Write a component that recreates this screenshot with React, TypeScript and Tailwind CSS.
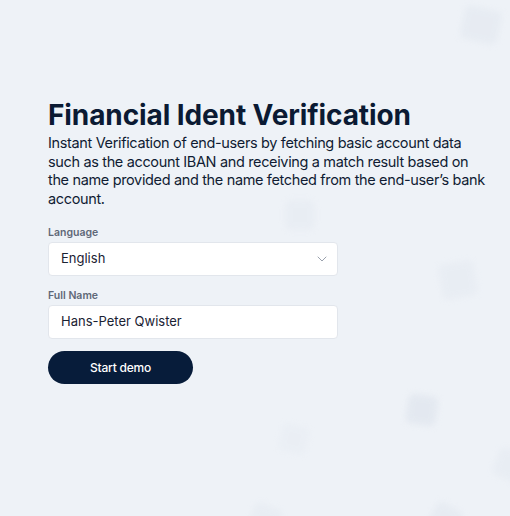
import React from "react";

const squares = [
  "left-[462px] top-[8px] w-[38px] h-[34px] rotate-[12deg] opacity-40",
  "left-[285px] top-[200px] w-[30px] h-[30px] opacity-30",
  "left-[440px] top-[262px] w-[36px] h-[36px] rotate-[-10deg] opacity-30",
  "left-[407px] top-[395px] w-[30px] h-[30px] rotate-[8deg] opacity-60",
  "left-[280px] top-[425px] w-[28px] h-[28px] rotate-[15deg] opacity-20",
  "left-[250px] top-[505px] w-[30px] h-[30px] rotate-[20deg] opacity-30",
  "left-[430px] top-[505px] w-[30px] h-[30px] rotate-[30deg] opacity-40",
  "left-[495px] top-[450px] w-[30px] h-[30px] rotate-[20deg] opacity-30",
];

export default function App() {
  return (
    <div
      className="relative w-[510px] h-[516px] overflow-hidden bg-[#eef2f7]"
      style={{ fontFamily: "Inter, 'Noto Sans', sans-serif" }}
    >
      {squares.map((c, i) => (
        <div key={i} className={`absolute rounded-md bg-[#dde3ec] blur-[3px] ${c}`} />
      ))}

      <div className="relative pl-[48px] pt-[98px] text-[#0b1a33]">
        <h1 className="text-[28px] leading-[34px] font-bold tracking-[-0.1px]">
          Financial Ident Verification
        </h1>
        <p className="mt-[2px] w-[440px] text-[14.5px] leading-[18.5px] tracking-[-0.35px] text-[#101c33]">
          Instant Verification of end-users by fetching basic account data such as the account IBAN and receiving a match result based on the name provided and the name fetched from the end-user’s bank account.
        </p>

        <div className="mt-[17px] flex flex-col w-[290px]">
          <label className="text-[10.5px] font-semibold text-[#5f6878] leading-[16px]">Language</label>
          <div className="mt-[1px] h-[34px] flex items-center justify-between bg-white border border-[#e2e6ec] rounded-[4px] pl-[12px] pr-[10px]">
            <span className="text-[13px] text-[#1a2233]">English</span>
            <svg width="10" height="6" viewBox="0 0 10 6" fill="none">
              <path d="M1 1l4 4 4-4" stroke="#9aa1ad" strokeWidth="1" strokeLinecap="round" strokeLinejoin="round" />
            </svg>
          </div>

          <label className="mt-[12px] text-[10.5px] font-semibold text-[#5f6878] leading-[16px]">Full Name</label>
          <div className="mt-[1px] h-[34px] flex items-center bg-white border border-[#e2e6ec] rounded-[4px] pl-[12px]">
            <span className="text-[13px] text-[#1a2233]">Hans-Peter Qwister</span>
          </div>

          <button className="mt-[12px] w-[145px] h-[33px] rounded-full bg-[#071c3a] text-white text-[12px] font-medium tracking-[-0.2px]">
            Start demo
          </button>
        </div>
      </div>
    </div>
  );
}
